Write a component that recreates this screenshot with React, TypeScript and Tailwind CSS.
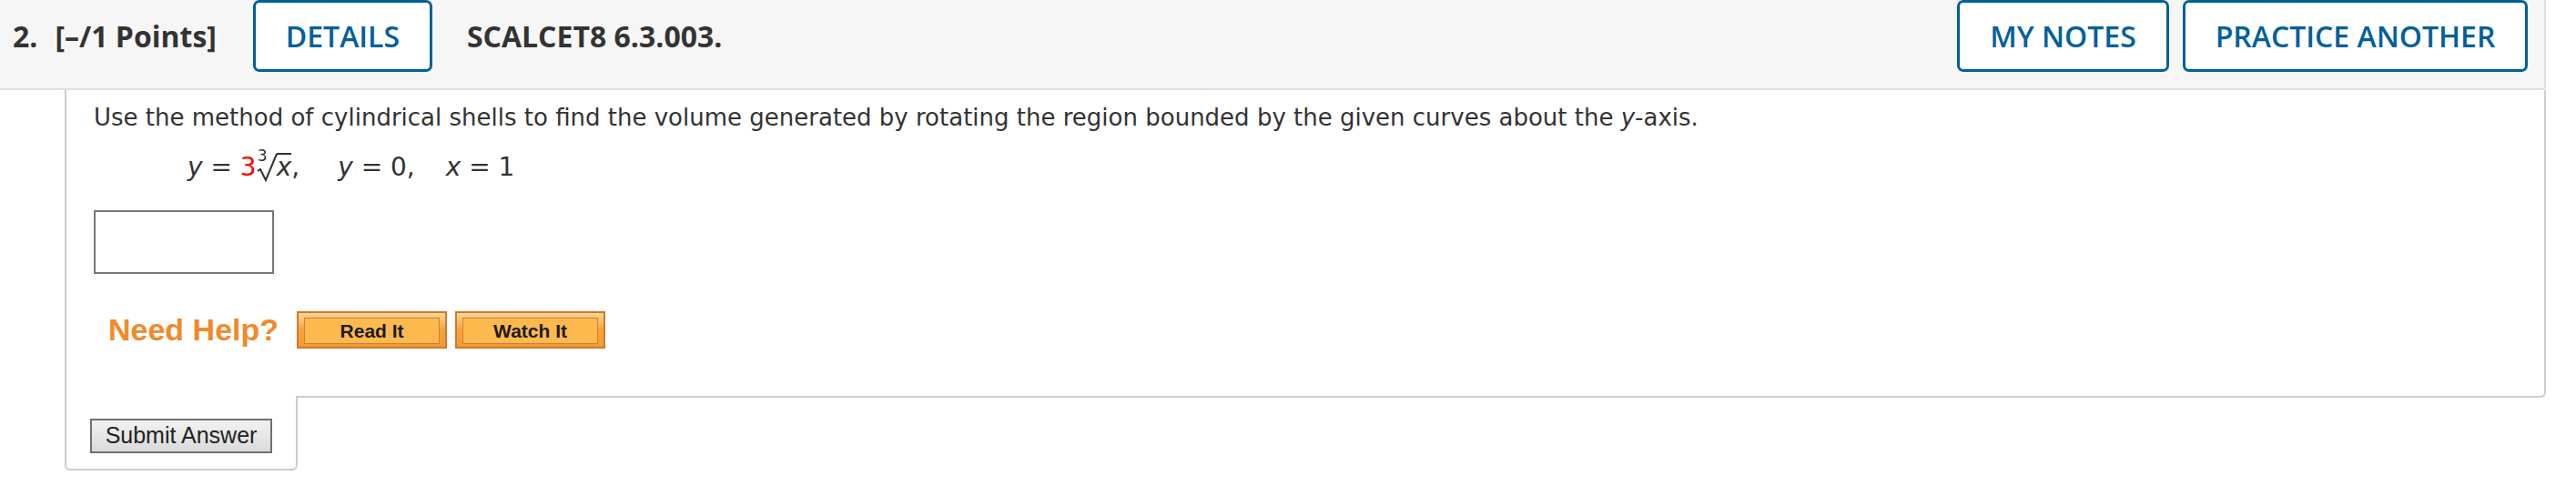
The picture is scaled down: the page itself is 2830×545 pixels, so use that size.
export default function App() {
  return (
    <div className="min-h-[545px] w-[2830px] bg-white text-[#333333]">
      <Header />
      <QuestionBody />
      <SubmitBox />
    </div>
  );
}

function HeaderButton({ label, width }: { label: string; width: string }) {
  return (
    <button
      type="button"
      className={`flex h-[79px] ${width} items-center justify-center rounded-[7px] border-[3px] border-[#01609b] bg-white font-['Open_Sans',sans-serif] text-[32px] font-semibold text-[#01609b]`}
    >
      {label}
    </button>
  );
}

function Header() {
  return (
    <div className="flex h-[99px] w-[2797px] items-start justify-between rounded-br-[4px] border-r-2 border-b-2 border-[#dfdfdf] bg-[#f6f6f6] font-['Open_Sans',sans-serif] text-[32px] font-bold text-[#333333]">
      <div className="flex h-[79px] items-center">
        <span className="ml-[14px]">2.</span>
        <span className="ml-[19px]">[–/1 Points]</span>
        <div className="ml-[40px]">
          <HeaderButton label="DETAILS" width="w-[197px]" />
        </div>
        <span className="ml-[38px]">SCALCET8 6.3.003.</span>
      </div>
      <div className="mr-[18px] flex h-[79px] items-center gap-[15px]">
        <HeaderButton label="MY NOTES" width="w-[233px]" />
        <HeaderButton label="PRACTICE ANOTHER" width="w-[379px]" />
      </div>
    </div>
  );
}

// cube root with index and overbar
function CubeRoot({ children }: { children: React.ReactNode }) {
  return (
    <span className="relative inline-block pl-[22px] leading-[28px]">
      <span className="absolute left-[1px] top-[-5px] text-[17px] leading-[17px] not-italic">3</span>
      <svg className="absolute left-0 top-0" width="24" height="32" viewBox="0 0 24 32" fill="none">
        <path d="M1 20 L4 18 L10 30 L22 1" stroke="#333333" strokeWidth="2" strokeLinejoin="miter" />
      </svg>
      <span className="inline-block border-t-2 border-[#333333] leading-[28px]">{children}</span>
    </span>
  );
}

function OrangeButton({ label }: { label: string }) {
  return (
    <button
      type="button"
      className="h-[41px] w-[165px] border-2 border-[#cd7a2b] bg-gradient-to-b from-[#fcd494] via-[#f7a23a] to-[#f39b33] px-[6px] pt-[5px] pb-[3px]"
    >
      <span className="flex h-full w-full items-center justify-center border border-[#c2843d] bg-[#fdb94e] font-['Liberation_Sans',Arial,sans-serif] text-[21px] font-bold text-[#1b1b1b]">
        {label}
      </span>
    </button>
  );
}

function QuestionBody() {
  return (
    <div className="ml-[71px] w-[2726px] rounded-br-[6px] border-l-2 border-r-2 border-b-2 border-[#cccccc] pt-[15px] pb-[52px] pl-[30px] font-['DejaVu_Sans',Verdana,sans-serif]">
      <p className="text-[26px] leading-[30px]">
        Use the method of cylindrical shells to find the volume generated by rotating the region bounded by the given
        curves about the <i>y</i>-axis.
      </p>
      <div className="mt-[23px] pl-[103px] text-[28px] leading-[34px]">
        <i>y</i> = <span className="text-[#ff0000]">3</span>
        <CubeRoot>
          <i>x</i>
        </CubeRoot>
        ,<span className="ml-[42px]"><i>y</i> = 0,</span>
        <span className="ml-[34px]"><i>x</i> = 1</span>
      </div>
      <div className="mt-[30px] h-[70px] w-[198px] border-2 border-[#777777] bg-white" />
      <div className="mt-[41px] flex h-[41px] items-center">
        <span className="ml-[16px] font-['Liberation_Sans',Arial,sans-serif] text-[34px] font-bold text-[#f08a2b]">
          Need Help?
        </span>
        <div className="ml-[20px] flex gap-[9px]">
          <OrangeButton label="Read It" />
          <OrangeButton label="Watch It" />
        </div>
      </div>
    </div>
  );
}

function SubmitBox() {
  return (
    <div className="relative z-10 -mt-[2px] ml-[71px] w-[256px] rounded-b-[6px] border-l-2 border-r-2 border-b-2 border-[#cccccc] bg-white pt-[25px] pl-[26px] pb-[17px]">
      <button
        type="button"
        className="flex h-[38px] w-[200px] items-center justify-center border-2 border-[#707070] bg-gradient-to-b from-[#f2f2f2] to-[#dadada] font-['Liberation_Sans',Arial,sans-serif] text-[25px] text-[#222222]"
      >
        Submit Answer
      </button>
    </div>
  );
}
